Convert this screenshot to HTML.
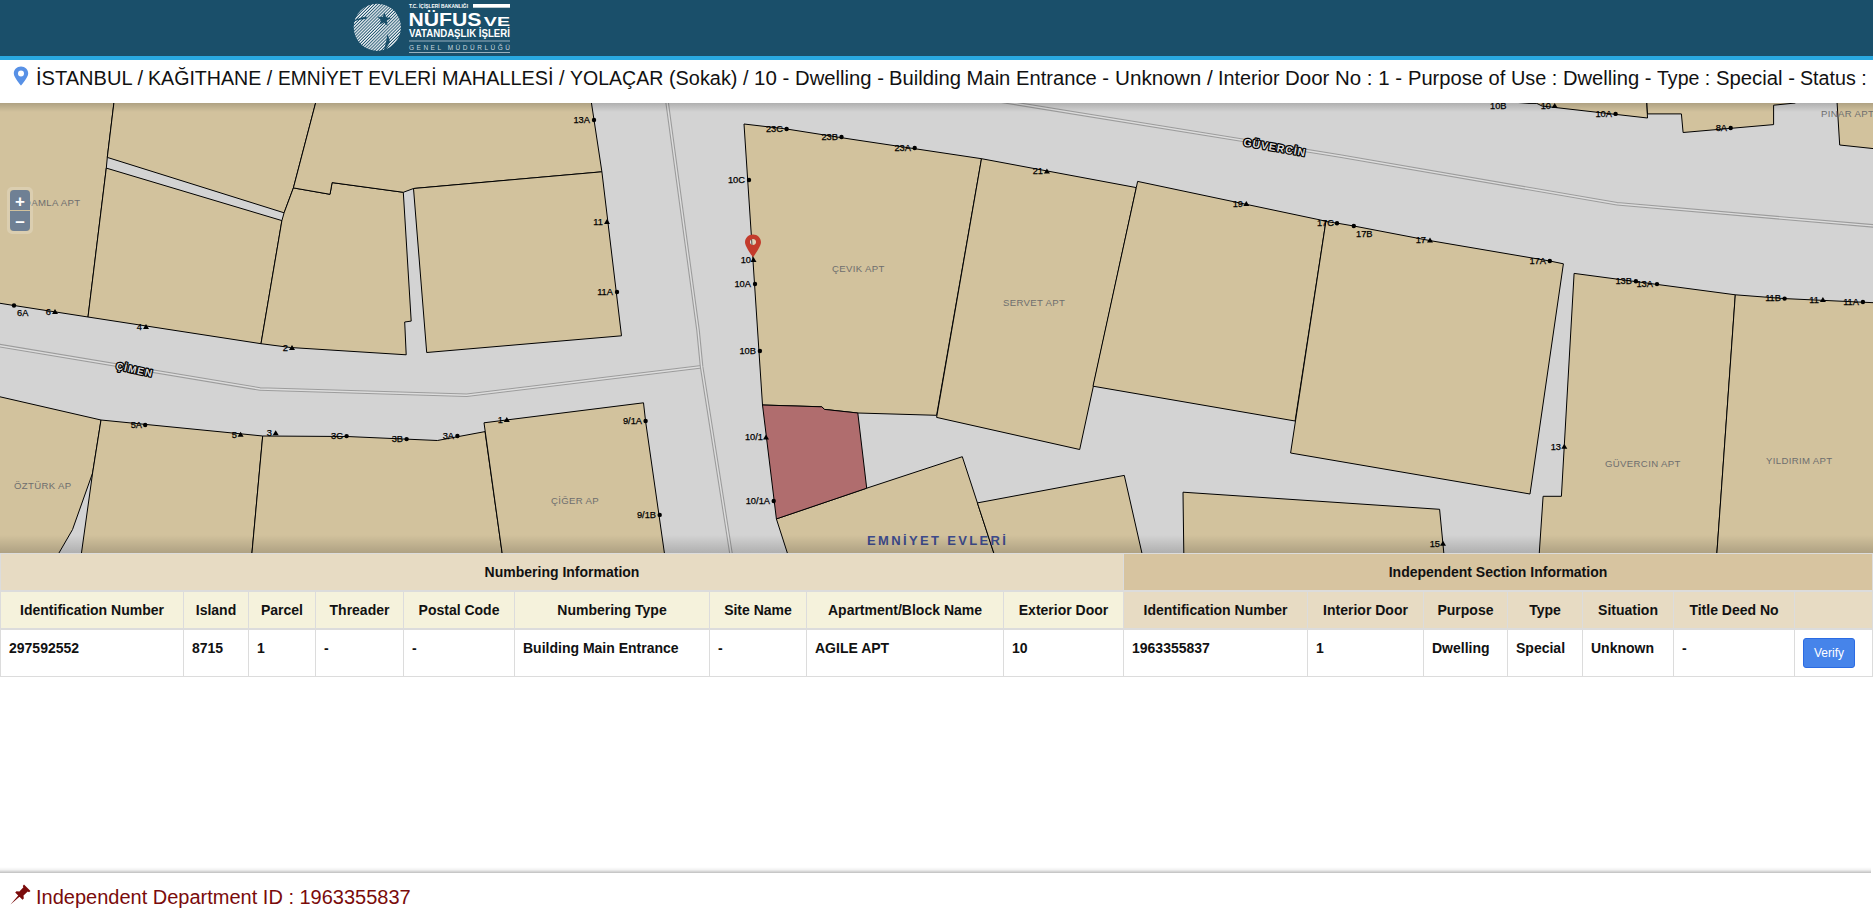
<!DOCTYPE html>
<html><head><meta charset="utf-8">
<style>
*{margin:0;padding:0;box-sizing:border-box}
html,body{width:1873px;height:922px;overflow:hidden;background:#fff;font-family:"Liberation Sans",sans-serif}
.a{position:absolute}
#hdr{left:0;top:0;width:1873px;height:56px;background:#1a4f6a}
#hdrline{left:0;top:56px;width:1873px;height:4px;background:#29a9e1}
#addr{left:0;top:65px;font-size:20px;color:#111;line-height:26px;white-space:nowrap}
#addr span{position:absolute;top:0;transform-origin:0 0}
#map{left:0;top:103px;width:1873px;height:450px;overflow:hidden;background:#d3d3d3}
#map svg{position:absolute;left:0;top:0;font-family:"Liberation Sans",sans-serif}
#shtop{left:0;top:0;width:1873px;height:9px;background:linear-gradient(rgba(0,0,0,.17),rgba(0,0,0,0))}
#shbot{left:0;bottom:0;width:1873px;height:18px;background:linear-gradient(rgba(0,0,0,0),rgba(0,0,0,.17))}
#zoomc{left:7px;top:84px;width:26px;height:47px;border-radius:5px;border:3px solid rgba(255,255,255,.2)}
#zoomc div{position:absolute;left:0;width:20px;background:#6f8094;color:#fff;font-weight:bold;font-size:17px;line-height:19px;text-align:center}
#tbl{left:0;top:553px;width:1873px;height:124px;background:#dcdcdc}
.c{position:absolute;font-size:14px;font-weight:bold;color:#111;white-space:nowrap}
.h1{background:#e7dbc3;text-align:center;line-height:36px}
.h2{background:#f5f2dc;text-align:center;line-height:36px}
.h2r{background:#e7dbc3;text-align:center;line-height:36px}
.d{background:#fff;line-height:20px;padding:8px 0 0 8px}
#verify{left:1803px;top:638px;width:52px;height:30px;background:#4684ea;border:1px solid #2b6be3;border-radius:3px;color:#fff;font-size:12px;text-align:center;line-height:29px}
#sep{left:0;top:867px;width:1871px;height:6px;background:linear-gradient(rgba(0,0,0,0) 0%,rgba(0,0,0,.05) 45%,rgba(0,0,0,.25) 100%)}
#foot{left:36px;top:884px;font-size:20px;color:#7a0b0b;line-height:26px;white-space:nowrap}
</style></head><body>
<div id="hdr" class="a"></div>
<svg class="a" style="left:340px;top:0px" width="180" height="56" viewBox="340 0 180 56">
<defs><pattern id="hp" width="2.2" height="2.2" patternUnits="userSpaceOnUse" patternTransform="rotate(45)"><rect width="1.25" height="2.2" fill="#f4f7f9"/></pattern></defs>
<circle cx="377.3" cy="27.3" r="23.6" fill="url(#hp)"/>
<path d="M351 22.5Q358 17.5 367 16.8L366 18.8Q358 19.5 351 22.5Z" fill="#1a4f6a"/>
<path d="M387.5 34L390 42L383 53.5L386 42Z" fill="#1a4f6a"/>
<polygon points="384.72,12.44 386.00,17.36 391.04,18.07 386.75,20.81 387.63,25.82 383.70,22.59 379.21,24.97 381.07,20.24 377.41,16.70 382.49,17.01" fill="#1a4f6a"/>
<g fill="#fff" font-family="Liberation Sans" font-weight="bold">
<text x="409" y="8.2" font-size="5" textLength="59" lengthAdjust="spacingAndGlyphs">T.C. İÇİŞLERİ BAKANLIĞI</text>
<rect x="473" y="4" width="37" height="3.7"/>
<text x="408.5" y="25.6" font-size="17.5" textLength="73" lengthAdjust="spacingAndGlyphs">NÜFUS</text>
<text x="483.8" y="25.6" font-size="13.5" textLength="26.2" lengthAdjust="spacingAndGlyphs">VE</text>
<text x="409" y="37.4" font-size="10" textLength="101" lengthAdjust="spacingAndGlyphs">VATANDAŞLIK İŞLERİ</text>
<rect x="409" y="40.6" width="101" height="0.8" fill="#b9cbd6"/>
<text x="409" y="49.8" font-size="6.5" font-weight="normal" fill="#c9d6de" textLength="101" lengthAdjust="spacing">GENEL MÜDÜRLÜĞÜ</text>
<rect x="409" y="52.1" width="101" height="0.8" fill="#b9cbd6"/>
</g></svg>
<div id="hdrline" class="a"></div>
<div id="addr" class="a"><span style="left:35.7px;transform:scaleX(1.0030)">İSTANBUL / </span><span style="left:148.3px;transform:scaleX(0.9806)">KAĞITHANE / </span><span style="left:278px;transform:scaleX(0.9596)">EMNİYET EVLERİ </span><span style="left:441.9px;transform:scaleX(0.9934)">MAHALLESİ / </span><span style="left:570px;transform:scaleX(0.9767)">YOLAÇAR </span><span style="left:668.8px;transform:scaleX(0.9931)">(Sokak) / </span><span style="left:753.8px;transform:scaleX(1.0242)">10 - </span><span style="left:794.8px;transform:scaleX(1.0131)">Dwelling - </span><span style="left:889.4px;transform:scaleX(1.0108)">Building Main </span><span style="left:1016.4px;transform:scaleX(1.0079)">Entrance - </span><span style="left:1115px;transform:scaleX(1.0334)">Unknown / </span><span style="left:1218.4px;transform:scaleX(0.9880)">Interior </span><span style="left:1285.4px;transform:scaleX(1.0221)">Door No : 1 - </span><span style="left:1408.1px;transform:scaleX(1.0059)">Purpose of </span><span style="left:1511px;transform:scaleX(0.9933)">Use : </span><span style="left:1562.9px;transform:scaleX(1.0078)">Dwelling - </span><span style="left:1657px;transform:scaleX(0.9776)">Type : </span><span style="left:1715.7px;transform:scaleX(1.0147)">Special - </span><span style="left:1800.3px;transform:scaleX(0.9836)">Status :</span></div>
<svg class="a" style="left:13px;top:66px" width="16" height="20" viewBox="0 0 16 20"><path d="M8 0.5C3.9 0.5 0.8 3.6 0.8 7.5C0.8 11.5 8 19.5 8 19.5S15.2 11.5 15.2 7.5C15.2 3.6 12.1 0.5 8 0.5z M8 4.4A3 3 0 1 1 8 10.4A3 3 0 1 1 8 4.4z" fill="#5891e6" fill-rule="evenodd"/></svg>
<div id="map" class="a">
<svg width="1873" height="450" viewBox="0 103 1873 450">
<polygon points="-10.0,98.0 114.5,98.0 107.3,157.4 106.3,168.1 88.0,317.0 14.0,305.5 -10.0,301.7" fill="#d2c29d" stroke="#000" stroke-width="1"/>
<polygon points="114.5,98.0 316.9,98.0 293.4,187.9 284.1,212.8 107.3,157.4" fill="#d2c29d" stroke="#000" stroke-width="1"/>
<polygon points="106.3,168.1 281.9,220.6 261.0,343.7 88.0,317.0" fill="#d2c29d" stroke="#000" stroke-width="1"/>
<polygon points="293.4,187.9 330.0,194.3 332.1,182.6 403.3,192.3 411.2,321.1 404.7,322.0 406.2,354.8 290.5,347.5 261.0,343.7 281.9,220.6 284.1,212.8" fill="#d2c29d" stroke="#000" stroke-width="1"/>
<polygon points="316.9,98.0 590.7,98.0 601.9,171.8 413.5,188.5 403.3,192.3 332.1,182.6 330.0,194.3 293.4,187.9" fill="#d2c29d" stroke="#000" stroke-width="1"/>
<polygon points="413.5,188.5 601.9,171.8 621.5,335.8 426.7,352.5" fill="#d2c29d" stroke="#000" stroke-width="1"/>
<polygon points="-10.0,394.5 101.0,420.0 92.6,473.0 72.5,529.6 54.9,560.0 -10.0,560.0" fill="#d2c29d" stroke="#000" stroke-width="1"/>
<polygon points="101.0,420.0 262.7,436.0 251.3,560.0 80.5,560.0 92.6,473.0" fill="#d2c29d" stroke="#000" stroke-width="1"/>
<polygon points="262.7,436.0 347.0,436.5 437.4,440.5 485.0,431.6 503.1,560.0 251.3,560.0" fill="#d2c29d" stroke="#000" stroke-width="1"/>
<polygon points="484.0,422.8 643.5,402.8 645.6,421.4 665.4,560.0 503.1,560.0" fill="#d2c29d" stroke="#000" stroke-width="1"/>
<polygon points="744.0,124.0 786.6,129.0 850.0,139.0 981.5,158.7 936.6,415.3 857.8,413.0 824.5,409.4 821.8,406.8 762.5,405.0" fill="#d2c29d" stroke="#000" stroke-width="1"/>
<polygon points="981.5,158.7 1136.3,187.6 1079.7,449.5 936.6,417.4" fill="#d2c29d" stroke="#000" stroke-width="1"/>
<polygon points="1137.6,181.4 1320.5,220.0 1325.9,221.5 1295.1,421.0 1093.0,386.2 1136.3,187.6" fill="#d2c29d" stroke="#000" stroke-width="1"/>
<polygon points="1325.9,221.5 1338.0,223.3 1353.8,226.0 1430.0,240.6 1549.8,261.0 1563.4,263.8 1530.0,494.0 1290.6,453.0" fill="#d2c29d" stroke="#000" stroke-width="1"/>
<polygon points="1574.1,273.4 1735.3,294.8 1716.4,560.0 1538.8,560.0 1543.1,496.3 1561.4,496.3" fill="#d2c29d" stroke="#000" stroke-width="1"/>
<polygon points="1735.3,294.8 1784.6,298.6 1880.0,303.0 1880.0,560.0 1716.4,560.0" fill="#d2c29d" stroke="#000" stroke-width="1"/>
<polygon points="776.4,518.9 866.7,488.2 962.3,456.7 996.1,560.0 789.6,560.0" fill="#d2c29d" stroke="#000" stroke-width="1"/>
<polygon points="977.4,502.9 1124.3,475.4 1143.5,560.0 996.1,560.0" fill="#d2c29d" stroke="#000" stroke-width="1"/>
<polygon points="1183.9,560.0 1183.0,492.2 1439.6,509.3 1444.5,560.0" fill="#d2c29d" stroke="#000" stroke-width="1"/>
<polygon points="1500.0,98.0 1646.6,98.0 1647.5,118.0 1542.0,106.0 1536.8,103.4 1529.0,103.4 1500.0,101.0" fill="#d2c29d" stroke="#000" stroke-width="1"/>
<polygon points="1646.6,98.0 1800.0,98.0 1795.4,103.0 1773.6,105.2 1773.6,124.6 1683.1,132.5 1681.4,113.9 1647.5,113.9" fill="#d2c29d" stroke="#000" stroke-width="1"/>
<polygon points="1836.8,98.0 1880.0,98.0 1880.0,149.3 1839.7,145.0" fill="#d2c29d" stroke="#000" stroke-width="1"/>
<polygon points="762.5,405.0 821.8,406.8 824.5,409.4 857.8,413.0 866.7,488.2 776.4,518.9" fill="#b06d6e" stroke="#000" stroke-width="1"/>
<polyline points="-10.0,344.0 260.0,389.0 466.7,395.3 701.6,366.7" fill="none" stroke="#9c9c9c" stroke-width="3.6"/>
<polyline points="-10.0,344.0 260.0,389.0 466.7,395.3 701.6,366.7" fill="none" stroke="#dddddd" stroke-width="1.4"/>
<polyline points="666.5,98.0 698.0,330.0 701.6,366.7 732.0,560.0" fill="none" stroke="#9c9c9c" stroke-width="3.6"/>
<polyline points="666.5,98.0 698.0,330.0 701.6,366.7 732.0,560.0" fill="none" stroke="#dddddd" stroke-width="1.4"/>
<polyline points="1000.0,101.0 1340.0,156.0 1617.0,203.8 1880.0,226.5" fill="none" stroke="#9c9c9c" stroke-width="3.6"/>
<polyline points="1000.0,101.0 1340.0,156.0 1617.0,203.8 1880.0,226.5" fill="none" stroke="#dddddd" stroke-width="1.4"/>
<circle cx="14" cy="305.5" r="2.2" fill="#000"/>
<circle cx="594" cy="120" r="2.2" fill="#000"/>
<circle cx="617" cy="292" r="2.2" fill="#000"/>
<circle cx="749" cy="180" r="2.2" fill="#000"/>
<circle cx="755" cy="284" r="2.2" fill="#000"/>
<circle cx="759.9" cy="351" r="2.2" fill="#000"/>
<circle cx="773.7" cy="501" r="2.2" fill="#000"/>
<circle cx="786.6" cy="129" r="2.2" fill="#000"/>
<circle cx="841.5" cy="137" r="2.2" fill="#000"/>
<circle cx="914.7" cy="148" r="2.2" fill="#000"/>
<circle cx="1337" cy="223.3" r="2.2" fill="#000"/>
<circle cx="1353.8" cy="226" r="2.2" fill="#000"/>
<circle cx="1549.8" cy="261" r="2.2" fill="#000"/>
<circle cx="1615.6" cy="113.9" r="2.2" fill="#000"/>
<circle cx="1730.7" cy="128" r="2.2" fill="#000"/>
<circle cx="1635.9" cy="281.2" r="2.2" fill="#000"/>
<circle cx="1657" cy="284.1" r="2.2" fill="#000"/>
<circle cx="1784.6" cy="298.6" r="2.2" fill="#000"/>
<circle cx="1862.9" cy="302" r="2.2" fill="#000"/>
<circle cx="145.2" cy="425" r="2.2" fill="#000"/>
<circle cx="346.6" cy="436.1" r="2.2" fill="#000"/>
<circle cx="406.6" cy="439.1" r="2.2" fill="#000"/>
<circle cx="457.4" cy="436" r="2.2" fill="#000"/>
<circle cx="645.6" cy="421" r="2.2" fill="#000"/>
<circle cx="659.7" cy="514.9" r="2.2" fill="#000"/>
<path d="M55 309L58 314L52 314Z" fill="#000"/>
<path d="M146 324L149 329L143 329Z" fill="#000"/>
<path d="M292 345L295 350L289 350Z" fill="#000"/>
<path d="M607 219L610 224L604 224Z" fill="#000"/>
<path d="M753.5 257L756.5 262L750.5 262Z" fill="#000"/>
<path d="M766 434.5L769 439.5L763 439.5Z" fill="#000"/>
<path d="M1046.9 168.5L1049.9 173.5L1043.9 173.5Z" fill="#000"/>
<path d="M1246.3 201L1249.3 206L1243.3 206Z" fill="#000"/>
<path d="M1430 237.6L1433 242.6L1427 242.6Z" fill="#000"/>
<path d="M1554.7 103L1557.7 108L1551.7 108Z" fill="#000"/>
<path d="M1822.9 297L1825.9 302L1819.9 302Z" fill="#000"/>
<path d="M1564.3 443.7L1567.3 448.7L1561.3 448.7Z" fill="#000"/>
<path d="M1443 540.8L1446 545.8L1440 545.8Z" fill="#000"/>
<path d="M240.6 431.7L243.6 436.7L237.6 436.7Z" fill="#000"/>
<path d="M275.7 430.3L278.7 435.3L272.7 435.3Z" fill="#000"/>
<path d="M506.8 417L509.8 422L503.8 422Z" fill="#000"/>
<g font-size="9.3" fill="#000" stroke="#000" stroke-width="0.25">
<text x="17" y="316" text-anchor="start">6A</text>
<text x="51" y="315" text-anchor="end">6</text>
<text x="142" y="330" text-anchor="end">4</text>
<text x="288" y="351" text-anchor="end">2</text>
<text x="590" y="123" text-anchor="end">13A</text>
<text x="603" y="225" text-anchor="end">11</text>
<text x="613" y="295" text-anchor="end">11A</text>
<text x="745" y="183" text-anchor="end">10C</text>
<text x="751" y="263" text-anchor="end">10</text>
<text x="751" y="287" text-anchor="end">10A</text>
<text x="756" y="354" text-anchor="end">10B</text>
<text x="763" y="440" text-anchor="end">10/1</text>
<text x="770" y="504" text-anchor="end">10/1A</text>
<text x="783" y="132" text-anchor="end">23C</text>
<text x="838" y="140" text-anchor="end">23B</text>
<text x="911" y="151" text-anchor="end">23A</text>
<text x="1043" y="174" text-anchor="end">21</text>
<text x="1243" y="207" text-anchor="end">19</text>
<text x="1334" y="226" text-anchor="end">17C</text>
<text x="1356" y="237" text-anchor="start">17B</text>
<text x="1426" y="243" text-anchor="end">17</text>
<text x="1546" y="264" text-anchor="end">17A</text>
<text x="1490" y="109" text-anchor="start">10B</text>
<text x="1551" y="109" text-anchor="end">10</text>
<text x="1612" y="117" text-anchor="end">10A</text>
<text x="1727" y="131" text-anchor="end">8A</text>
<text x="1632" y="284" text-anchor="end">13B</text>
<text x="1653" y="287" text-anchor="end">13A</text>
<text x="1781" y="301" text-anchor="end">11B</text>
<text x="1819" y="303" text-anchor="end">11</text>
<text x="1859" y="305" text-anchor="end">11A</text>
<text x="1561" y="450" text-anchor="end">13</text>
<text x="1440" y="547" text-anchor="end">15</text>
<text x="142" y="428" text-anchor="end">5A</text>
<text x="237" y="438" text-anchor="end">5</text>
<text x="272" y="436" text-anchor="end">3</text>
<text x="343" y="439" text-anchor="end">3C</text>
<text x="403" y="442" text-anchor="end">3B</text>
<text x="454" y="439" text-anchor="end">3A</text>
<text x="503" y="423" text-anchor="end">1</text>
<text x="642" y="424" text-anchor="end">9/1A</text>
<text x="656" y="518" text-anchor="end">9/1B</text>
</g><g font-size="9.6" fill="#6e6e6e" letter-spacing="0.35">
<text x="24" y="206">DAMLA APT</text>
<text x="14" y="489">ÖZTÜRK AP</text>
<text x="832" y="272">ÇEVIK APT</text>
<text x="1003" y="306">SERVET APT</text>
<text x="551" y="504">ÇİĞER AP</text>
<text x="1605" y="467">GÜVERCIN APT</text>
<text x="1766" y="464">YILDIRIM APT</text>
<text x="1821" y="117">PINAR APT</text>
</g>
<g font-size="9" font-weight="bold" fill="#dcdcdc" stroke="#000" stroke-width="2.4" stroke-linejoin="round" paint-order="stroke">
<text transform="translate(115.5,369) rotate(12.5)" font-size="10" letter-spacing="1.1">ÇİMEN</text>
<text transform="translate(1243,145.5) rotate(10)" font-size="10.5" letter-spacing="1.0">GÜVERCİN</text>
</g>
<text x="867" y="545" font-size="13" font-weight="bold" fill="#3d4b8c" letter-spacing="2.35">EMNİYET EVLERİ</text>
<path d="M753 234.5c-4.5 0-8 3.4-8 7.8c0 4.5 8 15 8 15s8-10.5 8-15c0-4.4-3.5-7.8-8-7.8z M753 239a3 3 0 1 0 0.01 0z" fill="#c33b2c" fill-rule="evenodd"/><circle cx="753" cy="242" r="3" fill="#fff" fill-opacity="0.3"/>
</svg>
<div id="shtop" class="a"></div><div id="shbot" class="a"></div>
<div id="zoomc" class="a"><div style="top:0;height:20px;border-radius:4px 4px 0 0;line-height:23px">+</div><div style="top:21px;height:20px;border-radius:0 0 4px 4px;line-height:22px">&#8211;</div></div>
</div>
<div id="tbl" class="a"></div>
<div class="c h1" style="left:1px;top:554px;width:1122px;height:36px;">Numbering Information</div>
<div class="c h1" style="left:1124px;top:554px;width:748px;height:36px;background:#d7c4a0">Independent Section Information</div>
<div class="c h2" style="left:1px;top:592px;width:182px;height:36px;">Identification Number</div>
<div class="c d" style="left:1px;top:630px;width:182px;height:46px;">297592552</div>
<div class="c h2" style="left:184px;top:592px;width:64px;height:36px;">Island</div>
<div class="c d" style="left:184px;top:630px;width:64px;height:46px;">8715</div>
<div class="c h2" style="left:249px;top:592px;width:66px;height:36px;">Parcel</div>
<div class="c d" style="left:249px;top:630px;width:66px;height:46px;">1</div>
<div class="c h2" style="left:316px;top:592px;width:87px;height:36px;">Threader</div>
<div class="c d" style="left:316px;top:630px;width:87px;height:46px;">-</div>
<div class="c h2" style="left:404px;top:592px;width:110px;height:36px;">Postal Code</div>
<div class="c d" style="left:404px;top:630px;width:110px;height:46px;">-</div>
<div class="c h2" style="left:515px;top:592px;width:194px;height:36px;">Numbering Type</div>
<div class="c d" style="left:515px;top:630px;width:194px;height:46px;">Building Main Entrance</div>
<div class="c h2" style="left:710px;top:592px;width:96px;height:36px;">Site Name</div>
<div class="c d" style="left:710px;top:630px;width:96px;height:46px;">-</div>
<div class="c h2" style="left:807px;top:592px;width:196px;height:36px;">Apartment/Block Name</div>
<div class="c d" style="left:807px;top:630px;width:196px;height:46px;">AGILE APT</div>
<div class="c h2" style="left:1004px;top:592px;width:119px;height:36px;">Exterior Door</div>
<div class="c d" style="left:1004px;top:630px;width:119px;height:46px;">10</div>
<div class="c h2r" style="left:1124px;top:592px;width:183px;height:36px;">Identification Number</div>
<div class="c d" style="left:1124px;top:630px;width:183px;height:46px;">1963355837</div>
<div class="c h2r" style="left:1308px;top:592px;width:115px;height:36px;">Interior Door</div>
<div class="c d" style="left:1308px;top:630px;width:115px;height:46px;">1</div>
<div class="c h2r" style="left:1424px;top:592px;width:83px;height:36px;">Purpose</div>
<div class="c d" style="left:1424px;top:630px;width:83px;height:46px;">Dwelling</div>
<div class="c h2r" style="left:1508px;top:592px;width:74px;height:36px;">Type</div>
<div class="c d" style="left:1508px;top:630px;width:74px;height:46px;">Special</div>
<div class="c h2r" style="left:1583px;top:592px;width:90px;height:36px;">Situation</div>
<div class="c d" style="left:1583px;top:630px;width:90px;height:46px;">Unknown</div>
<div class="c h2r" style="left:1674px;top:592px;width:120px;height:36px;">Title Deed No</div>
<div class="c d" style="left:1674px;top:630px;width:120px;height:46px;">-</div>
<div class="c h2r" style="left:1795px;top:592px;width:77px;height:36px;"></div>
<div class="c d" style="left:1795px;top:630px;width:77px;height:46px;"></div>
<div id="verify" class="a">Verify</div>
<div id="sep" class="a"></div>
<svg class="a" style="left:10px;top:884px" width="21" height="21" viewBox="0 0 21 21"><path d="M14 0.5L20.5 7L19 8.2L17.8 7.6L13.5 11.6L13.8 14.5L12.5 15.8L5.2 8.5L6.5 7.2L9.4 7.5L13.4 3.2L12.8 2z M8.2 11.5L9.5 12.8L0.5 20.5z" fill="#7a0b0b"/></svg>
<div id="foot" class="a">Independent Department ID : 1963355837</div>
</body></html>
